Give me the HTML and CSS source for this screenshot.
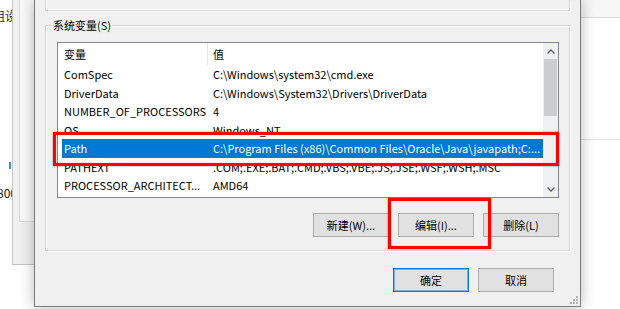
FILE: index.html
```html
<!DOCTYPE html>
<html lang="zh-CN">
<head>
<meta charset="utf-8">
<title>系统变量</title>
<link rel="stylesheet" href="styles.css">
</head>
<body>
<div class="screen">
  <div class="bgleft">
    <div class="under">
      <div class="utext t1">组设置</div>
      <div class="utick"></div>
      <div class="utext t2">800</div>
    </div>
    <div class="lwin">
      <div class="lwin-inner"></div>
    </div>
  </div>

  <div class="dialog">
    <div class="group-top"></div>
    <fieldset class="sys">
      <legend>系统变量(S)</legend>
      <div class="listbox">
        <div class="lv">
          <div class="hdr">
            <div class="h1">变量</div>
            <div class="hdiv"></div>
            <div class="h2">值</div>
          </div>
          <div class="row"><div class="c1">ComSpec</div><div class="c2">C:\Windows\system32\cmd.exe</div></div>
          <div class="row"><div class="c1">DriverData</div><div class="c2">C:\Windows\System32\Drivers\DriverData</div></div>
          <div class="row"><div class="c1">NUMBER_OF_PROCESSORS</div><div class="c2">4</div></div>
          <div class="row"><div class="c1">OS</div><div class="c2">Windows_NT</div></div>
          <div class="row sel"><div class="c1">Path</div><div class="c2">C:\Program Files (x86)\Common Files\Oracle\Java\javapath;C:...</div></div>
          <div class="row"><div class="c1">PATHEXT</div><div class="c2">.COM;.EXE;.BAT;.CMD;.VBS;.VBE;.JS;.JSE;.WSF;.WSH;.MSC</div></div>
          <div class="row"><div class="c1">PROCESSOR_ARCHITECT...</div><div class="c2">AMD64</div></div>
        </div>
        <div class="scroll">
          <div class="arrow"><svg width="8" height="5" viewBox="0 0 8 5"><polyline points="0.5,4.5 4,1 7.5,4.5" fill="none" stroke="#606060" stroke-width="1.3"/></svg></div>
          <div class="thumb"></div>
          <div class="track"></div>
          <div class="arrow"><svg width="8" height="5" viewBox="0 0 8 5"><polyline points="0.5,0.5 4,4 7.5,0.5" fill="none" stroke="#606060" stroke-width="1.3"/></svg></div>
        </div>
      </div>
      <div class="btnrow">
        <button class="btn">新建(W)...</button>
        <button class="btn">编辑(I)...</button>
        <button class="btn">删除(L)</button>
      </div>
    </fieldset>
    <div class="okrow">
      <button class="btn default">确定</button>
      <button class="btn">取消</button>
    </div>
    <svg class="grip" width="8" height="8" viewBox="0 0 8 8">
      <rect x="6" y="0" width="2" height="2" fill="#b4b4b4"/>
      <rect x="3" y="3" width="2" height="2" fill="#b4b4b4"/>
      <rect x="6" y="3" width="2" height="2" fill="#b4b4b4"/>
      <rect x="0" y="6" width="2" height="2" fill="#b4b4b4"/>
      <rect x="3" y="6" width="2" height="2" fill="#b4b4b4"/>
      <rect x="6" y="6" width="2" height="2" fill="#b4b4b4"/>
    </svg>
  </div>

  <div class="bgright">
    <div class="rtop"></div>
    <div class="rline2"></div>
  </div>

  <div class="mark mark-path"></div>
  <div class="mark mark-edit"></div>
</div>
</body>
</html>
```

FILE: styles.css
```css
* { box-sizing: border-box; }
html, body { margin: 0; padding: 0; }
body {
  width: 620px;
  height: 309px;
  overflow: hidden;
  background: #ffffff;
  font-family: "Noto Sans CJK SC", "Noto Sans", sans-serif;
  font-size: 11px;
  color: #000;
}
.screen {
  position: relative;
  display: flex;
  height: 309px;
  width: 620px;
  overflow: hidden;
}

/* left background window */
.bgleft { width: 34px; flex: none; display: flex; }
.under {
  width: 12px;
  flex: none;
  overflow: hidden;
  background: #fff;
  display: flex;
  flex-direction: column;
}
.utext { white-space: nowrap; line-height: 16px; color: #1a1a1a; font-size: 12px; }
.t1 { margin-top: 8px; margin-left: -7px; }
.utick { margin-top: 138px; margin-left: 9px; width: 2px; height: 7px; background: #3d8fd8; }
.t2 { margin-top: 16px; margin-left: -3px; }
.lwin {
  flex: 1;
  height: 265px;
  background: #f0f0f0;
  border-left: 1px solid #c4c4c4;
  border-bottom: 1px solid #c4c4c4;
  padding-left: 6px;
}
.lwin-inner {
  height: 222px;
  background: #f9f9f9;
  border-left: 1px solid #dadada;
  border-bottom: 1px solid #dadada;
}

/* dialog */
.dialog {
  position: relative;
  z-index: 1;
  width: 547px;
  height: 307px;
  flex: none;
  background: #f0f0f0;
  border: 1px solid #7a7a7a;
  border-top: none;
  box-shadow: 0 0 14px rgba(0, 0, 0, 0.28);
  display: flex;
  flex-direction: column;
}
.group-top {
  height: 11px;
  margin: 0 10px;
  border: 1px solid #d5d5d5;
  border-top: none;
  box-shadow: 1px 1px 0 #fff, inset 1px -1px 0 #fff;
}
.sys {
  margin: 6px 10px 0 10px;
  padding: 9px 10px 13px 11px;
  border: 1px solid #d5d5d5;
  box-shadow: 1px 1px 0 #fff, inset 1px 1px 0 #fff;
  min-inline-size: 0;
}
.sys legend {
  margin-left: -5px;
  padding: 0 1px;
  line-height: 16px;
  font-size: 11px;
}

.listbox {
  height: 156px;
  border: 1px solid #828790;
  background: #fff;
  display: flex;
}
.lv { flex: 1; min-width: 0; overflow: hidden; }
.hdr { height: 22px; display: flex; align-items: stretch; }
.h1 { width: 149px; padding-left: 6px; line-height: 22px; }
.hdiv { width: 1px; background: #e5e5e5; }
.h2 { padding-left: 5px; line-height: 22px; }
.row {
  margin-left: 4px;
  height: 18.5px;
  display: flex;
  white-space: nowrap;
  line-height: 18.5px;
}
.c1 { width: 145px; flex: none; padding-left: 2px; overflow: hidden; }
.c2 { padding-left: 6px; overflow: hidden; }
.row.sel { background: #0078d7; color: #fff; }

.scroll {
  width: 15px;
  flex: none;
  background: #f0f0f0;
  display: flex;
  flex-direction: column;
}
.arrow { height: 16px; display: flex; align-items: center; justify-content: center; }
.thumb { height: 57px; margin: 0 1px; background: #cdcdcd; }
.track { flex: 1; }

.btnrow {
  margin-top: 15px;
  display: flex;
  justify-content: flex-end;
  gap: 9px;
}
.btn {
  width: 76px;
  height: 24px;
  padding: 0;
  margin: 0;
  background: #e1e1e1;
  border: 1px solid #adadad;
  font-family: "Noto Sans CJK SC", "Noto Sans", sans-serif;
  font-size: 11px;
  color: #000;
  line-height: 20px;
}
.btn.default {
  border-color: #0078d7;
  box-shadow: inset 0 0 0 1px rgba(0, 120, 215, 0.45);
}
.okrow {
  margin-top: 17px;
  padding-right: 26px;
  display: flex;
  justify-content: flex-end;
  gap: 9px;
}
.grip { position: absolute; right: 2px; bottom: 2px; }

/* right background */
.bgright { flex: 1; background: #fff; }
.rtop { height: 18px; background: #f7f7f7; border-bottom: 1px solid #d9d9d9; }
.rline2 { margin-top: 121px; height: 1px; background: #e2e2e2; }

/* red annotation boxes */
.mark {
  position: absolute;
  z-index: 2;
  border: 3px solid #ff0000;
  box-shadow: 0 0 1.5px rgba(90, 0, 0, 0.6), inset 0 0 1px rgba(90, 0, 0, 0.5);
}
.mark-path { left: 53px; top: 132px; width: 506px; height: 34px; }
.mark-edit { left: 388px; top: 198px; width: 103px; height: 51px; }
```
